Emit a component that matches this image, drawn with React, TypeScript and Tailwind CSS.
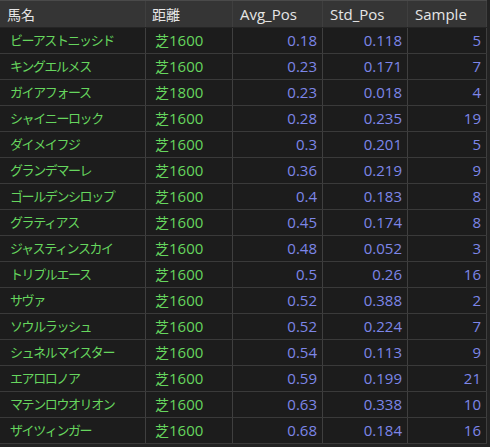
import React from 'react';

const rows: [string, string, string, string, number][] = [
  ['ビーアストニッシド', '芝1600', '0.18', '0.118', 5],
  ['キングエルメス', '芝1600', '0.23', '0.171', 7],
  ['ガイアフォース', '芝1800', '0.23', '0.018', 4],
  ['シャイニーロック', '芝1600', '0.28', '0.235', 19],
  ['ダイメイフジ', '芝1600', '0.3', '0.201', 5],
  ['グランデマーレ', '芝1600', '0.36', '0.219', 9],
  ['ゴールデンシロップ', '芝1600', '0.4', '0.183', 8],
  ['グラティアス', '芝1600', '0.45', '0.174', 8],
  ['ジャスティンスカイ', '芝1600', '0.48', '0.052', 3],
  ['トリプルエース', '芝1600', '0.5', '0.26', 16],
  ['サヴァ', '芝1600', '0.52', '0.388', 2],
  ['ソウルラッシュ', '芝1600', '0.52', '0.224', 7],
  ['シュネルマイスター', '芝1600', '0.54', '0.113', 9],
  ['エアロロノア', '芝1600', '0.59', '0.199', 21],
  ['マテンロウオリオン', '芝1600', '0.63', '0.338', 10],
  ['ザイツィンガー', '芝1600', '0.68', '0.184', 16],
];

const cols = 'grid grid-cols-[146px_87px_90px_85px_79px]';
const cell = 'border-r border-[#3f3f3f] flex items-center whitespace-nowrap overflow-hidden';

export default function App() {
  return (
    <div
      className="w-[490px] h-[447px] bg-[#232323] overflow-hidden text-[15px]"
      style={{ fontFamily: '"Open Sans", "Noto Sans CJK JP", sans-serif' }}
    >
      <div className="w-[487px] border-t border-[#4a4a4a]">
        <div className={`${cols} h-[27px] bg-[#353535] text-[#e6e6e6] border-b border-[#252525]`}>
          <div className={`${cell} px-[7px] text-[14px]`}>馬名</div>
          <div className={`${cell} px-[6px] text-[14px]`}>距離</div>
          <div className={`${cell} px-[7px]`}>Avg_Pos</div>
          <div className={`${cell} px-[7px]`}>Std_Pos</div>
          <div className={`${cell} px-[7px]`}>Sample</div>
        </div>
        {rows.map((r) => (
          <div key={r[0]} className={`${cols} h-[26px] bg-[#1c1c1c] border-b border-[#3a3a3a]`}>
            <div className={`${cell} pl-[10px] text-[#66d65e] text-[13px] tracking-[-1.4px]`}>{r[0]}</div>
            <div className={`${cell} pl-[9px] text-[#66d65e]`}>
              <span className="text-[14px]">{r[1].slice(0, 1)}</span>
              <span>{r[1].slice(1)}</span>
            </div>
            <div className={`${cell} justify-end pr-[5px] text-[#7d86e8]`}>{r[2]}</div>
            <div className={`${cell} justify-end pr-[5px] text-[#7d86e8]`}>{r[3]}</div>
            <div className={`${cell} justify-end pr-[5px] text-[#7d86e8]`}>{r[4]}</div>
          </div>
        ))}
      </div>
    </div>
  );
}
